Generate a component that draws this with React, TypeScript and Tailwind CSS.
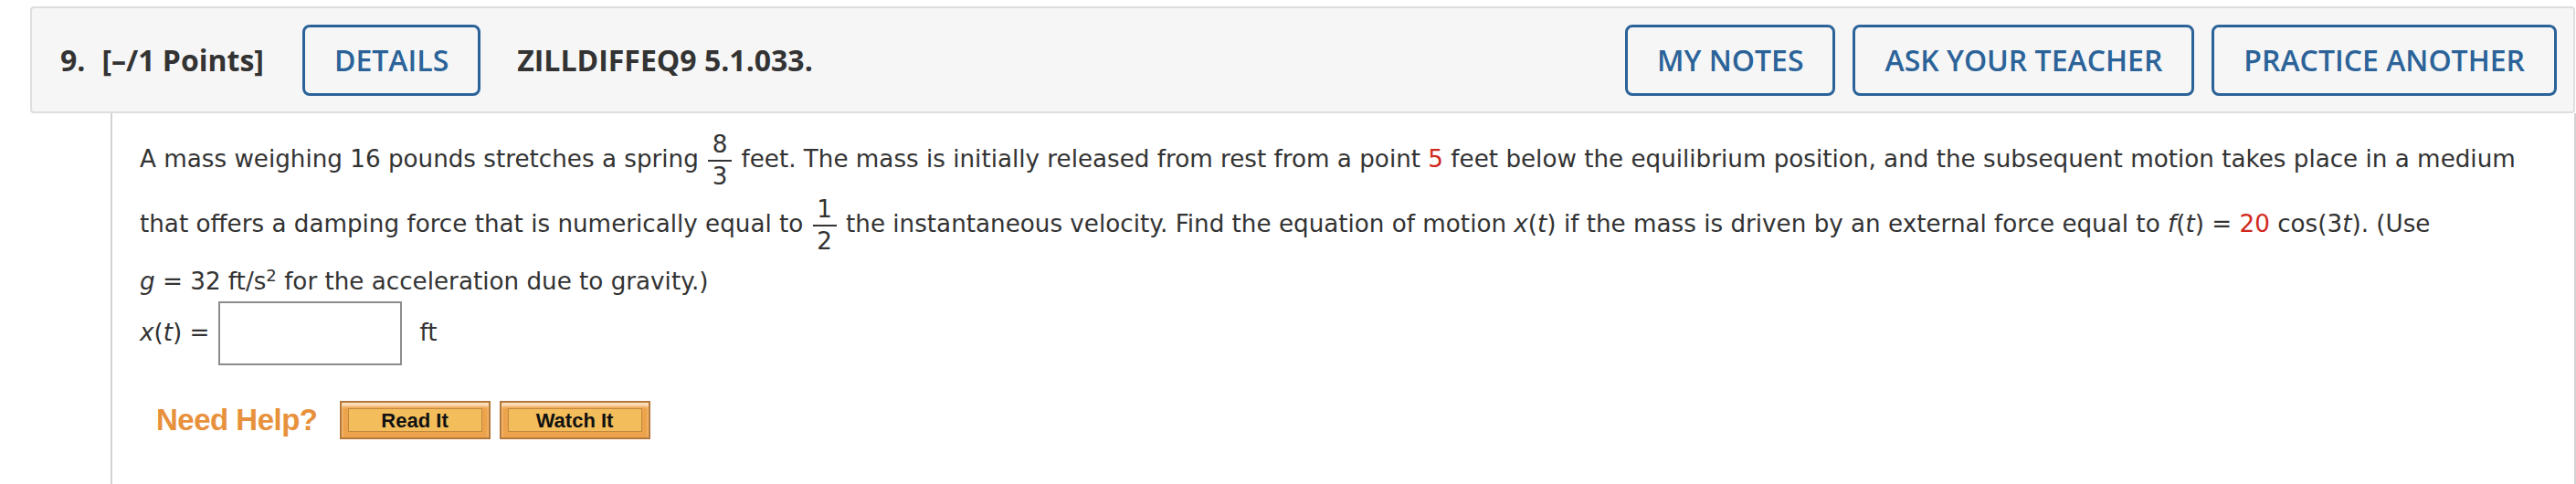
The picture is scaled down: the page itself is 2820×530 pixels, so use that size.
import React from 'react';

// stacked fraction that sits on the text's middle line
const Frac = ({ n, d }: { n: string; d: string }) => (
  <span className="inline-flex flex-col items-center align-middle mx-[2px]">
    <span className="leading-[26px]">{n}</span>
    <span className="mt-[4px] mb-[3px] h-[2px] w-[26px] bg-[#333]" />
    <span className="leading-[26px]">{d}</span>
  </span>
);

const Red = ({ children }: { children: React.ReactNode }) => (
  <span className="text-[#d0281c]">{children}</span>
);

const HeaderButton = ({ label }: { label: string }) => (
  <button className="h-[78px] px-[32px] border-[3px] border-[#2b6399] rounded-[8px] text-[#2b6399] text-[32px] font-semibold leading-none bg-[#f6f6f6]">
    {label}
  </button>
);

const HelpButton = ({ label }: { label: string }) => (
  <button className="w-[165px] h-[42px] p-[6px_7px] border-2 border-[#b5783a] bg-[#eda24c] shadow-[inset_0_4px_3px_rgba(255,240,220,0.8)]">
    <span className="flex h-full w-full items-center justify-center border border-[#c4883f] bg-[#f3bd5b] text-[22px] font-bold text-[#111] font-['Liberation_Sans',Arial,sans-serif]">
      {label}
    </span>
  </button>
);

export default function App() {
  return (
    <div className="w-[2820px] h-[530px] bg-white overflow-hidden pt-[7px]">
      {/* question header bar */}
      <div className="ml-[33px] w-[2786px] h-[117px] flex items-center pl-[31px] pr-[18px] bg-[#f6f6f6] border-2 border-[#dedede] rounded-[4px] font-['Open_Sans',sans-serif] text-[#333]">
        <span className="text-[32px] font-bold">9.</span>
        <span className="ml-[18px] text-[32px] font-bold">[–/1 Points]</span>
        <div className="ml-[42px]">
          <HeaderButton label="DETAILS" />
        </div>
        <span className="ml-[40px] text-[32px] font-bold">ZILLDIFFEQ9 5.1.033.</span>
        <div className="ml-auto flex gap-[19px]">
          <HeaderButton label="MY NOTES" />
          <HeaderButton label="ASK YOUR TEACHER" />
          <HeaderButton label="PRACTICE ANOTHER" />
        </div>
      </div>

      {/* question body */}
      <div className="ml-[121px] w-[2699px] h-[406px] border-l-2 border-r-2 border-[#d2d2d2] pl-[30px] pt-[21px] text-[26.2px] text-[#333] font-['DejaVu_Sans',Verdana,sans-serif]">
        <div className="h-[60px] flex items-center whitespace-nowrap">
          <p className="leading-[26px]">
            A mass weighing 16 pounds stretches a spring <Frac n="8" d="3" /> feet. The mass is initially released from rest from a point <Red>5</Red> feet below the equilibrium position, and the subsequent motion takes place in a medium
          </p>
        </div>
        <div className="h-[82px] flex items-center whitespace-nowrap">
          <p className="leading-[26px]">
            that offers a damping force that is numerically equal to <Frac n="1" d="2" /> the instantaneous velocity. Find the equation of motion <i>x</i>(<i>t</i>) if the mass is driven by an external force equal to <i>f</i>(<i>t</i>) = <Red>20</Red> cos(3<i>t</i>). (Use
          </p>
        </div>
        <div className="h-[42px] flex items-center whitespace-nowrap">
          <p className="leading-[26px]">
            <i>g</i> = 32 ft/s<sup className="text-[18px]">2</sup> for the acceleration due to gravity.)
          </p>
        </div>
        <div className="h-[72px] flex items-center">
          <span>
            <i>x</i>(<i>t</i>) =
          </span>
          <div className="ml-[10px] w-[201px] h-[70px] border-2 border-[#8c8c8c] bg-white" />
          <span className="ml-[19px]">ft</span>
        </div>
        <div className="mt-[38px] h-[42px] flex items-center pl-[18px]">
          <span className="text-[33px] font-bold text-[#e8913c] font-['Liberation_Sans',Arial,sans-serif] tracking-[-0.5px]">
            Need Help?
          </span>
          <div className="ml-[24px] flex gap-[10px]">
            <HelpButton label="Read It" />
            <HelpButton label="Watch It" />
          </div>
        </div>
      </div>
    </div>
  );
}
